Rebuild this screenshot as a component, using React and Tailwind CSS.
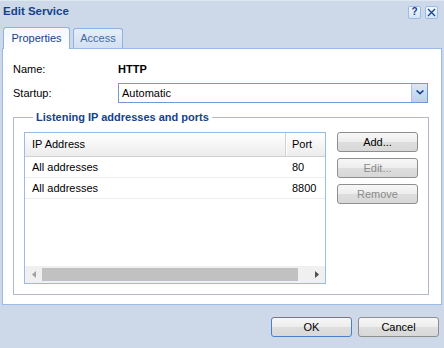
const btn =
  'h-[20px] w-[81px] rounded-[3px] border text-[11px] leading-none flex items-center justify-center bg-[linear-gradient(to_bottom,#f7f7f7_0%,#ededed_50%,#dedede_51%,#d8d8d8_100%)]';

function Btn({ children, disabled, focus }) {
  return (
    <div
      className={`${btn} ${focus ? 'border-[#4a80c8]' : 'border-[#8e8e8e]'} ${
        disabled ? 'text-[#8a8a8a]' : 'text-black'
      }`}
    >
      {children}
    </div>
  );
}

function ToolBtn({ children }) {
  return (
    <div className="w-[13px] h-[13px] rounded-[2px] border border-[#99bbe8] bg-[linear-gradient(to_bottom,#f3f7fc,#d6e3f3)] flex items-center justify-center text-[#15428b]">
      {children}
    </div>
  );
}

const rows = [
  { ip: 'All addresses', port: '80' },
  { ip: 'All addresses', port: '8800' },
];

export default function App() {
  return (
    <div className="w-[444px] h-[348px] bg-[#cdd9e8] border-t border-[#dfe7f1] flex flex-col font-['Liberation_Sans',Arial,sans-serif] text-[11px] text-black overflow-hidden">
      <div className="h-[21px] pl-[3px] pr-[6px] flex items-center justify-between">
        <span className="font-bold text-[#15428b] text-[11.5px]">Edit Service</span>
        <div className="flex gap-[4px] mt-[1px]">
          <ToolBtn>
            <span className="font-bold text-[10px] leading-none">?</span>
          </ToolBtn>
          <ToolBtn>
            <svg viewBox="0 0 9 9" className="w-[9px] h-[9px]" fill="none" stroke="currentColor" strokeWidth="1.3">
              <path d="M1 1L8 8M8 1L1 8" />
            </svg>
          </ToolBtn>
        </div>
      </div>

      <div className="mt-[5px] pl-[3px] flex items-end gap-[3px] h-[21px] relative z-10">
        <div className="w-[67px] h-[22px] -mb-px rounded-t-[3px] border border-b-0 border-[#8db2e3] bg-[linear-gradient(to_bottom,#f3f7fc,#ffffff)] flex items-center justify-center text-[#15428b]">
          Properties
        </div>
        <div className="w-[50px] h-[20px] rounded-t-[3px] border border-b-0 border-[#8db2e3] bg-[linear-gradient(to_bottom,#e6eef8,#d2e0f1)] flex items-center justify-center text-[#416aa3]">
          Access
        </div>
      </div>

      <div className="mx-[2px] h-[257px] border border-[#99bbe8] bg-white pl-[10px] pr-[13px] pt-[12px]">
        <div className="flex items-center h-[16px]">
          <span className="w-[105px]">Name:</span>
          <span className="font-bold">HTTP</span>
        </div>
        <div className="flex items-center h-[20px] mt-[6px]">
          <span className="w-[105px]">Startup:</span>
          <div className="flex-1 h-[20px] flex border border-[#6e9ad6] bg-white">
            <span className="flex-1 pl-[3px] flex items-center">Automatic</span>
            <div className="w-[16px] border-l border-[#a9c4e8] bg-[linear-gradient(to_bottom,#dbe7f6,#bcd1ec)] flex items-center justify-center">
              <svg viewBox="0 0 8 6" className="w-[8px] h-[6px]" fill="#15428b">
                <path d="M0 1L1.2 0L4 2.6L6.8 0L8 1L4 4.8Z" />
              </svg>
            </div>
          </div>
        </div>

        <fieldset className="mt-[7px] border border-[#b5b8c8] px-[10px] pt-[8px] pb-[10px] flex">
          <legend className="ml-[9px] px-[3px] font-bold text-[#15428b] leading-[14px] text-[11px]">
            Listening IP addresses and ports
          </legend>
          <div className="flex">
            <div className="w-[302px] h-[152px] border border-[#99bbe8] flex flex-col">
              <div className="h-[24px] flex border-b border-[#d0d0d0] bg-[linear-gradient(to_bottom,#ffffff,#ececec)]">
                <div className="w-[261px] pl-[7px] flex items-center border-r border-[#d0d0d0]">IP Address</div>
                <div className="flex-1 pl-[5px] flex items-center border-l border-white">Port</div>
              </div>
              {rows.map((r, i) => (
                <div key={i} className="h-[21px] flex border-b border-[#ededed]">
                  <div className="w-[262px] pl-[7px] flex items-center">{r.ip}</div>
                  <div className="flex-1 pl-[5px] flex items-center">{r.port}</div>
                </div>
              ))}
              <div className="flex-1" />
              <div className="h-[17px] bg-[#f0f0f0] flex items-center">
                <div className="w-[17px] flex justify-center">
                  <svg viewBox="0 0 4 7" className="w-[4px] h-[7px]" fill="#a3a3a3">
                    <path d="M4 0V7L0 3.5Z" />
                  </svg>
                </div>
                <div className="w-[256px] h-[13px] bg-[#c1c1c1]" />
                <div className="flex-1 flex justify-end pr-[6px]">
                  <svg viewBox="0 0 4 7" className="w-[4px] h-[7px]" fill="#505050">
                    <path d="M0 0V7L4 3.5Z" />
                  </svg>
                </div>
              </div>
            </div>
            <div className="ml-[11px] flex flex-col gap-[6px]">
              <Btn>Add...</Btn>
              <Btn disabled>Edit...</Btn>
              <Btn disabled>Remove</Btn>
            </div>
          </div>
        </fieldset>
      </div>

      <div className="mt-[12px] pr-[5px] flex justify-end gap-[6px]">
        <Btn focus>OK</Btn>
        <Btn>Cancel</Btn>
      </div>
    </div>
  );
}
